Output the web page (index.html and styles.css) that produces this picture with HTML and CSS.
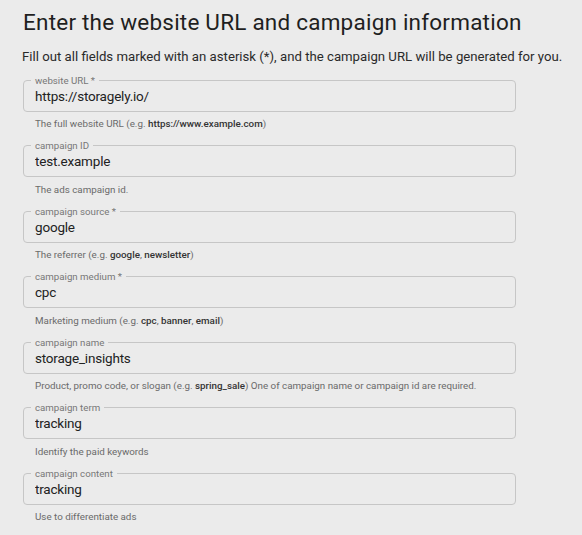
FILE: index.html
```
<!DOCTYPE html>
<html lang="en">
<head>
<meta charset="utf-8">
<title>Campaign URL Builder</title>
<link rel="stylesheet" href="styles.css">
</head>
<body>
<main class="page">
  <h1 class="title">Enter the website URL and campaign information</h1>
  <p class="intro">Fill out all fields marked with an asterisk (*), and the campaign URL will be generated for you.</p>
  <form class="form">
    <div class="field">
      <fieldset class="box"><legend class="label">website URL *</legend><input class="input" type="text" value="https://storagely.io/"></fieldset>
      <p class="help">The full website URL (e.g. <b>https://www.example.com</b>)</p>
    </div>
    <div class="field">
      <fieldset class="box"><legend class="label">campaign ID</legend><input class="input" type="text" value="test.example"></fieldset>
      <p class="help">The ads campaign id.</p>
    </div>
    <div class="field">
      <fieldset class="box"><legend class="label">campaign source *</legend><input class="input" type="text" value="google"></fieldset>
      <p class="help">The referrer (e.g. <b>google</b>, <b>newsletter</b>)</p>
    </div>
    <div class="field">
      <fieldset class="box"><legend class="label">campaign medium *</legend><input class="input" type="text" value="cpc"></fieldset>
      <p class="help">Marketing medium (e.g. <b>cpc</b>, <b>banner</b>, <b>email</b>)</p>
    </div>
    <div class="field">
      <fieldset class="box"><legend class="label">campaign name</legend><input class="input" type="text" value="storage_insights"></fieldset>
      <p class="help">Product, promo code, or slogan (e.g. <b>spring_sale</b>) One of campaign name or campaign id are required.</p>
    </div>
    <div class="field">
      <fieldset class="box"><legend class="label">campaign term</legend><input class="input" type="text" value="tracking"></fieldset>
      <p class="help">Identify the paid keywords</p>
    </div>
    <div class="field">
      <fieldset class="box"><legend class="label">campaign content</legend><input class="input" type="text" value="tracking"></fieldset>
      <p class="help">Use to differentiate ads</p>
    </div>
  </form>
</main>
</body>
</html>
```
FILE: styles.css
```
html, body {
  margin: 0;
  padding: 0;
  background: #ebebeb;
}
body {
  font-family: Roboto, "Noto Sans", Arial, sans-serif;
  color: #222;
}
.page {
  padding: 7.5px 0 0 23px;
  width: 493px;
}
.title {
  margin: 0;
  font-size: 22.5px;
  line-height: 28px;
  font-weight: 400;
  letter-spacing: 0.22px;
  color: #1f1f1f;
  white-space: nowrap;
}
.intro {
  margin: 12.7px 0 0 -1px;
  font-size: 13.2px;
  line-height: 18px;
  color: #2a2a2a;
  white-space: nowrap;
}
.form {
  margin-top: 8.8px;
}
.field {
  margin-bottom: 10px;
}
.box {
  margin: 0;
  border: 1px solid #c6c6c6;
  border-radius: 4px;
  padding: 0 11px 5px;
  min-width: 0;
}
.label {
  font-size: 9.7px;
  line-height: 11px;
  padding: 0 4px;
  margin-left: -4px;
  color: #777;
}
.input {
  display: block;
  width: 100%;
  box-sizing: border-box;
  height: 20px;
  margin: 0;
  padding: 0;
  border: 0;
  background: transparent;
  font-family: inherit;
  font-size: 13.5px;
  letter-spacing: -0.2px;
  line-height: 20px;
  color: #222;
  outline: none;
}
.help {
  margin: 5.5px 0 0 12px;
  font-size: 9.8px;
  line-height: 13px;
  color: #6a6a6a;
  white-space: nowrap;
}
.help b {
  font-weight: 500;
  color: #333;
}
```
